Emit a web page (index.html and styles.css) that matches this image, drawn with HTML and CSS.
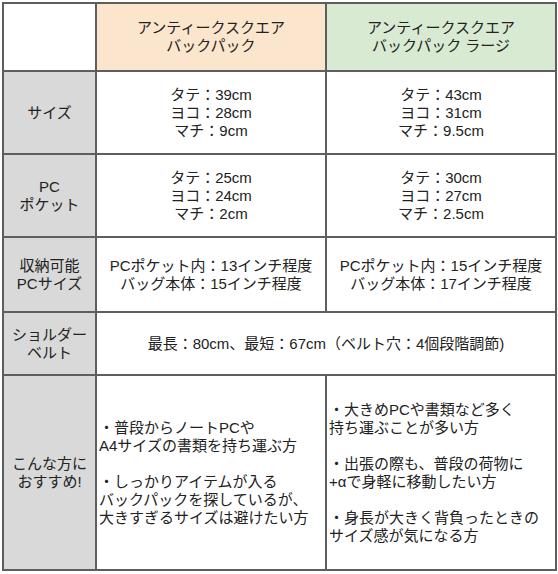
FILE: index.html
```html
<!DOCTYPE html>
<html lang="ja">
<head>
<meta charset="utf-8">
<link rel="stylesheet" href="styles.css">
</head>
<body>
<table class="spec">
  <colgroup>
    <col class="c-label">
    <col class="c-item">
    <col class="c-item">
  </colgroup>
  <tr class="r-head">
    <td class="blank"></td>
    <td class="head orange">アンティークスクエア<br>バックパック</td>
    <td class="head green">アンティークスクエア<br>バックパック ラージ</td>
  </tr>
  <tr class="r-size">
    <th>サイズ</th>
    <td>タテ：39cm<br>ヨコ：28cm<br>マチ：9cm</td>
    <td>タテ：43cm<br>ヨコ：31cm<br>マチ：9.5cm</td>
  </tr>
  <tr class="r-size">
    <th>PC<br>ポケット</th>
    <td>タテ：25cm<br>ヨコ：24cm<br>マチ：2cm</td>
    <td>タテ：30cm<br>ヨコ：27cm<br>マチ：2.5cm</td>
  </tr>
  <tr class="r-pc">
    <th>収納可能<br>PCサイズ</th>
    <td>PCポケット内：13インチ程度<br>バッグ本体：15インチ程度</td>
    <td>PCポケット内：15インチ程度<br>バッグ本体：17インチ程度</td>
  </tr>
  <tr class="r-belt">
    <th>ショルダー<br>ベルト</th>
    <td colspan="2">最長：80cm、最短：67cm（ベルト穴：4個段階調節)</td>
  </tr>
  <tr class="r-rec">
    <th>こんな方に<br>おすすめ!</th>
    <td class="left">・普段からノートPCや<br>A4サイズの書類を持ち運ぶ方<br><br>・しっかりアイテムが入る<br>バックパックを探しているが、<br>大きすぎるサイズは避けたい方</td>
    <td class="left">・大きめPCや書類など多く<br>持ち運ぶことが多い方<br><br>・出張の際も、普段の荷物に<br>+αで身軽に移動したい方<br><br>・身長が大きく背負ったときの<br>サイズ感が気になる方</td>
  </tr>
</table>
</body>
</html>
```

FILE: styles.css
```css
html, body {
  margin: 0;
  padding: 0;
  background: #ffffff;
}

body {
  padding: 2px 0 0 2px;
  font-family: "Liberation Sans", "Noto Sans CJK JP", sans-serif;
  font-size: 15px;
  line-height: 18px;
  color: #222222;
}

.spec {
  border-collapse: collapse;
  table-layout: fixed;
  width: 554px;
}

.c-label { width: 93px; }
.c-item { width: 230px; }

.spec th,
.spec td {
  border: 2px solid #5e5e5e;
  padding: 0 2px;
  text-align: center;
  vertical-align: middle;
  white-space: nowrap;
}

.spec th {
  font-weight: normal;
  background: #d9d9d9;
}

.spec .head.orange { background: #fce5cd; }
.spec .head.green { background: #d9ead3; }

.spec .left { text-align: left; }

.r-head { height: 68px; }
.r-size { height: 83px; }
.r-pc { height: 75px; }
.r-belt { height: 63px; }
.r-rec { height: 195px; }
```
